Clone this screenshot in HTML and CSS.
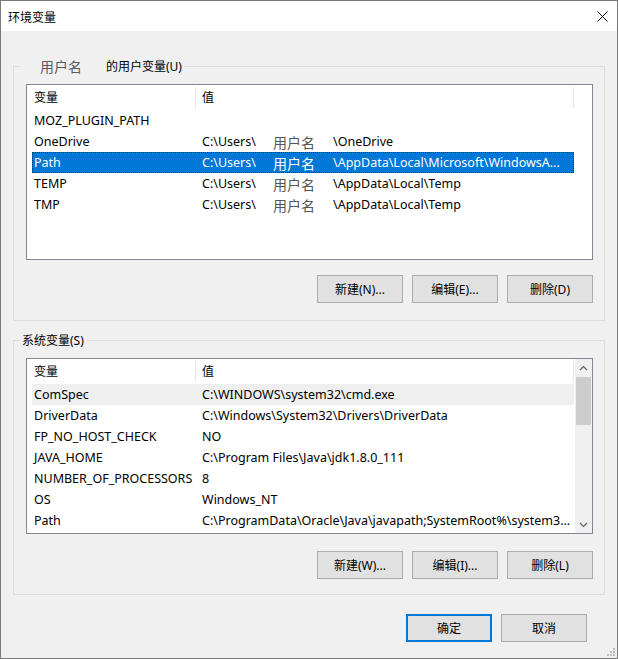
FILE: index.html
```html
<!DOCTYPE html>
<html lang="zh-CN">
<head>
<meta charset="utf-8">
<title>环境变量</title>
<link rel="stylesheet" href="styles.css">
</head>
<body>
<div class="window">
  <div class="titlebar">
    <span class="title">环境变量</span>
    <svg class="close" width="11" height="11" viewBox="0 0 11 11"><path d="M0.5 0.5 L10.5 10.5 M10.5 0.5 L0.5 10.5" stroke="#000" stroke-width="1" fill="none"/></svg>
  </div>
  <div class="content">
    <fieldset class="group group-user">
      <legend class="legend legend-user"><span class="uname">用户名</span>的用户变量(U)</legend>
      <div class="list">
        <div class="list-main">
          <div class="list-head"><div class="hcell hname">变量</div><div class="hcell hval">值</div></div>
          <div class="rows">
            <div class="row"><div class="c-name">MOZ_PLUGIN_PATH</div><div class="c-val"></div></div>
            <div class="row"><div class="c-name">OneDrive</div><div class="c-val"><span class="seg-drive">C:\Users\</span><span class="uname-cell">用户名</span><span>\OneDrive</span></div></div>
            <div class="row selected"><div class="c-name">Path</div><div class="c-val"><span class="seg-drive">C:\Users\</span><span class="uname-cell">用户名</span><span>\AppData\Local\Microsoft\WindowsA...</span></div></div>
            <div class="row"><div class="c-name">TEMP</div><div class="c-val"><span class="seg-drive">C:\Users\</span><span class="uname-cell">用户名</span><span>\AppData\Local\Temp</span></div></div>
            <div class="row"><div class="c-name">TMP</div><div class="c-val"><span class="seg-drive">C:\Users\</span><span class="uname-cell">用户名</span><span>\AppData\Local\Temp</span></div></div>
          </div>
        </div>
      </div>
      <div class="btn-row">
        <button class="btn">新建(N)...</button>
        <button class="btn">编辑(E)...</button>
        <button class="btn">删除(D)</button>
      </div>
    </fieldset>

    <fieldset class="group group-sys">
      <legend class="legend legend-sys">系统变量(S)</legend>
      <div class="list">
        <div class="list-main">
          <div class="list-head"><div class="hcell hname">变量</div><div class="hcell hval">值</div></div>
          <div class="rows">
            <div class="row hover"><div class="c-name">ComSpec</div><div class="c-val">C:\WINDOWS\system32\cmd.exe</div></div>
            <div class="row"><div class="c-name">DriverData</div><div class="c-val">C:\Windows\System32\Drivers\DriverData</div></div>
            <div class="row"><div class="c-name">FP_NO_HOST_CHECK</div><div class="c-val">NO</div></div>
            <div class="row"><div class="c-name">JAVA_HOME</div><div class="c-val">C:\Program Files\Java\jdk1.8.0_111</div></div>
            <div class="row"><div class="c-name">NUMBER_OF_PROCESSORS</div><div class="c-val">8</div></div>
            <div class="row"><div class="c-name">OS</div><div class="c-val">Windows_NT</div></div>
            <div class="row"><div class="c-name">Path</div><div class="c-val">C:\ProgramData\Oracle\Java\javapath;SystemRoot%\system3...</div></div>
          </div>
        </div>
        <div class="scrollbar">
          <div class="sb-btn"><svg width="9" height="6" viewBox="0 0 9 6"><polyline points="1,5 4.5,1.5 8,5" fill="none" stroke="#606060" stroke-width="1.2"/></svg></div>
          <div class="sb-track"><div class="sb-thumb"></div></div>
          <div class="sb-btn"><svg width="9" height="6" viewBox="0 0 9 6"><polyline points="1,1 4.5,4.5 8,1" fill="none" stroke="#606060" stroke-width="1.2"/></svg></div>
        </div>
      </div>
      <div class="btn-row btn-row-sys">
        <button class="btn">新建(W)...</button>
        <button class="btn">编辑(I)...</button>
        <button class="btn">删除(L)</button>
      </div>
    </fieldset>

    <div class="dialog-buttons">
      <button class="btn btn-default">确定</button>
      <button class="btn">取消</button>
    </div>
  </div>
  <svg class="grip" width="9" height="9" viewBox="0 0 9 9">
    <rect x="7" y="1" width="2" height="2" fill="#bdbdbd"/>
    <rect x="4" y="4" width="2" height="2" fill="#bdbdbd"/>
    <rect x="7" y="4" width="2" height="2" fill="#bdbdbd"/>
    <rect x="1" y="7" width="2" height="2" fill="#bdbdbd"/>
    <rect x="4" y="7" width="2" height="2" fill="#bdbdbd"/>
    <rect x="7" y="7" width="2" height="2" fill="#bdbdbd"/>
  </svg>
</div>
</body>
</html>
```
FILE: styles.css
```css
html, body {
  margin: 0;
  padding: 0;
}
body {
  font-family: "Noto Sans", "Noto Sans CJK SC", sans-serif;
  font-size: 12px;
  color: #000;
  background: #f0f0f0;
}
.window {
  width: 618px;
  height: 659px;
  box-sizing: border-box;
  border: 1px solid #7a7a7a;
  background: #f0f0f0;
  position: relative;
  display: flex;
  flex-direction: column;
}
.titlebar {
  height: 30px;
  flex: none;
  background: #fff;
  display: flex;
  align-items: center;
  justify-content: space-between;
  padding: 0 9px 0 7px;
}
.title {
  font-size: 12px;
  font-family: "Noto Sans CJK SC", sans-serif;
}
.close {
  display: block;
}
.content {
  padding: 26px 12px 0 12px;
  display: flex;
  flex-direction: column;
}
.group {
  margin: 0;
  min-width: 0;
  border: 1px solid #dcdcdc;
  padding: 9px 11px 17px 12px;
}
.group-sys {
  margin-top: 10px;
  padding-bottom: 15px;
}
.legend {
  margin-left: -6px;
  padding: 0 2px;
  height: 18px;
  display: flex;
  align-items: center;
  white-space: nowrap;
}
.legend-user {
  padding-left: 20px;
}
.uname {
  font-size: 14px;
  color: #5a5a5a;
  margin-right: 24px;
  font-family: "Noto Sans CJK SC", sans-serif;
}
.list {
  height: 176px;
  box-sizing: border-box;
  border: 1px solid #828790;
  background: #fff;
  display: flex;
}
.list-main {
  flex: 1;
  min-width: 0;
  overflow: hidden;
}
.list-head {
  height: 25px;
  display: flex;
  align-items: center;
}
.hcell {
  height: 21px;
  line-height: 21px;
  box-sizing: border-box;
  border-right: 1px solid #e5e5e5;
  flex: none;
}
.hname {
  width: 169px;
  padding-left: 7px;
}
.hval {
  width: 378px;
  padding-left: 6px;
}
.rows {
  margin-left: 5px;
  width: 542px;
}
.row {
  height: 21px;
  display: flex;
  align-items: center;
  white-space: nowrap;
  box-sizing: border-box;
  font-size: 12.5px;
}
.row.hover {
  background: #efefef;
}
.row.selected {
  background: #0078d7;
  color: #fff;
  outline: 1px dotted #0a3a66;
  outline-offset: -1px;
}
.c-name {
  width: 168px;
  flex: none;
  padding-left: 2px;
  box-sizing: border-box;
  overflow: hidden;
}
.c-val {
  flex: 1;
  min-width: 0;
  padding-left: 2px;
  display: flex;
  align-items: center;
  overflow: hidden;
}
.seg-drive {
  width: 71px;
  flex: none;
}
.uname-cell {
  width: 60px;
  flex: none;
  font-size: 14px;
  color: #555;
  font-family: "Noto Sans CJK SC", sans-serif;
}
.row.selected .uname-cell {
  color: #fff;
}
.scrollbar {
  width: 17px;
  flex: none;
  background: #f0f0f0;
  display: flex;
  flex-direction: column;
}
.sb-btn {
  height: 17px;
  flex: none;
  display: flex;
  align-items: center;
  justify-content: center;
}
.sb-track {
  flex: 1;
}
.sb-thumb {
  height: 48px;
  margin: 1px 1px 0 1px;
  background: #cdcdcd;
}
.btn-row {
  display: flex;
  justify-content: flex-end;
  gap: 9px;
  margin-top: 15px;
}
.btn-row-sys {
  margin-top: 17px;
}
.btn {
  width: 86px;
  height: 28px;
  box-sizing: border-box;
  border: 1px solid #adadad;
  background: #e1e1e1;
  font-family: "Noto Sans", "Noto Sans CJK SC", sans-serif;
  font-size: 12px;
  color: #000;
  padding: 0;
  margin: 0;
}
.btn-default {
  border: 2px solid #0078d7;
}
.dialog-buttons {
  display: flex;
  justify-content: flex-end;
  gap: 9px;
  margin: 19px 18px 0 0;
}
.grip {
  position: absolute;
  right: 2px;
  bottom: 2px;
}
```
